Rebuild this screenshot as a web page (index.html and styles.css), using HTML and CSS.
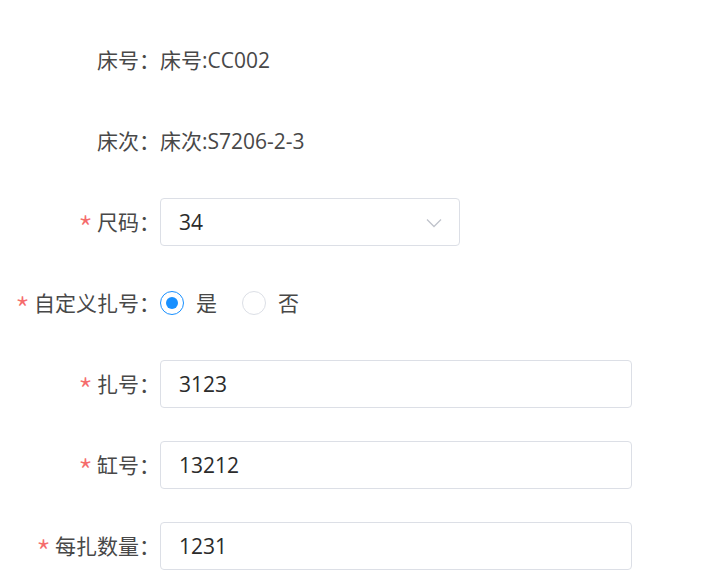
FILE: index.html
```html
<!DOCTYPE html>
<html lang="zh">
<head>
<meta charset="utf-8">
<link rel="stylesheet" href="styles.css">
</head>
<body>
<form class="form">
  <div class="row">
    <div class="label">床号：</div>
    <div class="content"><span class="value">床号:CC002</span></div>
  </div>
  <div class="row">
    <div class="label">床次：</div>
    <div class="content"><span class="value">床次:S7206-2-3</span></div>
  </div>
  <div class="row">
    <div class="label"><span class="req">*</span>尺码：</div>
    <div class="content">
      <div class="input select">
        <span class="text">34</span>
        <svg class="arrow" width="16" height="10" viewBox="0 0 16 10"><path d="M1 1.5 L8 8.5 L15 1.5" fill="none" stroke="#c0c4cc" stroke-width="1.3"/></svg>
      </div>
    </div>
  </div>
  <div class="row">
    <div class="label"><span class="req">*</span>自定义扎号：</div>
    <div class="content radios">
      <label class="radio"><span class="circle checked"></span><span class="rtext">是</span></label>
      <label class="radio"><span class="circle"></span><span class="rtext">否</span></label>
    </div>
  </div>
  <div class="row">
    <div class="label"><span class="req">*</span>扎号：</div>
    <div class="content"><div class="input wide"><span class="text">3123</span></div></div>
  </div>
  <div class="row">
    <div class="label"><span class="req">*</span>缸号：</div>
    <div class="content"><div class="input wide"><span class="text">13212</span></div></div>
  </div>
  <div class="row">
    <div class="label"><span class="req">*</span>每扎数量：</div>
    <div class="content"><div class="input wide"><span class="text">1231</span></div></div>
  </div>
</form>
</body>
</html>
```

FILE: styles.css
```css
html, body {
  margin: 0;
  padding: 0;
  background: #fff;
}
body {
  font-family: "Open Sans", "Noto Sans CJK SC", sans-serif;
  font-size: 21px;
  color: #484848;
}
.form {
  padding-top: 36px;
  display: flex;
  flex-direction: column;
  gap: 33px;
}
.row {
  display: flex;
  align-items: center;
  height: 48px;
}
.label {
  width: 160px;
  flex: none;
  display: flex;
  justify-content: flex-end;
  align-items: center;
  line-height: 48px;
  white-space: nowrap;
  color: #484848;
}
.req {
  font-family: "Noto Sans CJK SC", sans-serif;
  font-weight: 300;
  font-size: 34px;
  line-height: 34px;
  height: 34px;
  color: #f56c6c;
  margin-right: 4px;
  margin-top: 12px;
}
.content {
  display: flex;
  align-items: center;
  height: 48px;
}
.value {
  color: #484848;
  line-height: 48px;
}
.input {
  box-sizing: border-box;
  height: 48px;
  border: 1px solid #dcdfe6;
  border-radius: 4px;
  display: flex;
  align-items: center;
  padding-left: 18px;
  color: #2b2b2b;
}
.select {
  width: 300px;
  justify-content: space-between;
  padding-right: 17px;
}
.wide {
  width: 472px;
}
.text {
  line-height: 46px;
}
.arrow {
  display: block;
  margin-top: 1px;
}
.radios {
  gap: 25px;
}
.radio {
  display: flex;
  align-items: center;
  gap: 12px;
  color: #484848;
}
.circle {
  box-sizing: border-box;
  width: 24px;
  height: 24px;
  border-radius: 50%;
  border: 1px solid #dcdfe6;
  background: #fff;
  position: relative;
}
.circle.checked {
  border-color: #1890ff;
}
.circle.checked::after {
  content: "";
  position: absolute;
  left: 5px;
  top: 5px;
  width: 12px;
  height: 12px;
  border-radius: 50%;
  background: #1890ff;
}
.rtext {
  line-height: 24px;
}
```
